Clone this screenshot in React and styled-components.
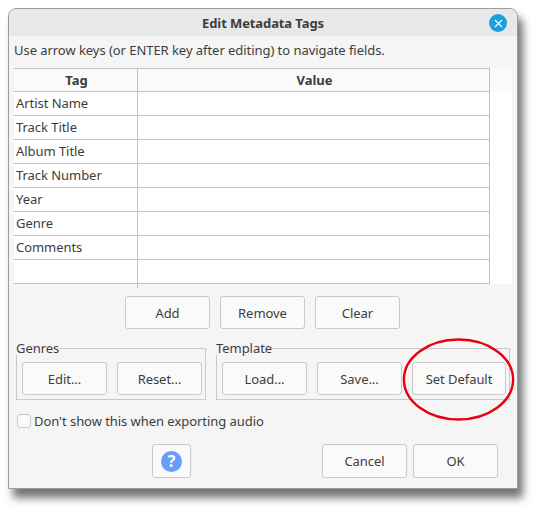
import React from "react";
import styled, { createGlobalStyle } from "styled-components";
import { X } from "lucide-react";

const GlobalStyle = createGlobalStyle`
    html, body {
        margin: 0;
        background: #fff;
    }
    body {
        font-family: "Noto Sans", "Open Sans", sans-serif;
        font-size: 13px;
        letter-spacing: -0.05px;
        color: #3d3d3d;
    }
`

const Page = styled.div`
    width: 541px;
    height: 512px;
    padding: 8px 0 0 8px;
    box-sizing: border-box;
    overflow: hidden;
`

const Dialog = styled.div`
    position: relative;
    width: 510px;
    height: 481px;
    box-sizing: border-box;
    border: 1px solid #9b9b9b;
    border-radius: 8px 8px 0 0;
    background: #f5f5f5;
    box-shadow: 5px 9px 8px rgba(0, 0, 0, 0.55);
    display: flex;
    flex-direction: column;
`

const TitleBar = styled.div`
    height: 27px;
    flex: none;
    background: #e8e8e8;
    border-radius: 7px 7px 0 0;
    display: flex;
    align-items: center;
    justify-content: center;
    position: relative;
    font-weight: 700;
    font-size: 13px;
    letter-spacing: -0.1px;
`

const CloseButton = styled.div`
    position: absolute;
    right: 10px;
    top: 5px;
    width: 18px;
    height: 18px;
    border-radius: 50%;
    background: #1f9ede;
    color: #fff;
    display: flex;
    align-items: center;
    justify-content: center;
`

const Hint = styled.div`
    height: 31px;
    padding: 1px 0 0 5px;
    line-height: 27px;
    flex: none;
`

const TableWrap = styled.div`
    width: 498px;
    margin-left: 5px;
    background: #fff;
    flex: none;
`

const Row = styled.div`
    display: grid;
    grid-template-columns: 124px 352px 22px;
    height: 24px;
    background: ${(p) => (p.$head ? "#fafafa" : "#fff")};
    box-sizing: border-box;
`

const Cell = styled.div`
    box-sizing: border-box;
    border-bottom: 1px solid #c2c2c2;
    border-top: ${(p) => (p.$head ? "1px solid #c2c2c2" : "none")};
    border-right: 1px solid #c2c2c2;
    padding-left: 2px;
    line-height: ${(p) => (p.$head ? "22px" : "23px")};
    font-weight: ${(p) => (p.$head ? 700 : 400)};
    text-align: ${(p) => (p.$head ? "center" : "left")};
    white-space: nowrap;
`

const TableFooter = styled.div`
    height: 4px;
    display: grid;
    grid-template-columns: 124px;
    background: #f5f5f5;
`

const FooterTick = styled.div`
    border-right: 1px solid #c2c2c2;
    height: 4px;
`

const Button = styled.button`
    width: ${(p) => p.$width || 85}px;
    height: 33px;
    padding: 0;
    flex: none;
    box-sizing: border-box;
    border: 1px solid #c9c9c9;
    border-radius: 3px;
    background: #fafafa;
    font: inherit;
    letter-spacing: inherit;
    color: inherit;
`

const AddRow = styled.div`
    display: flex;
    gap: 10px;
    padding: 8px 0 0 116px;
`

const Groups = styled.div`
    display: flex;
    gap: 10px;
    margin: 12px 0 0 7px;
`

const Group = styled.fieldset`
    margin: 0;
    padding: 7px 3px 4px 5px;
    width: ${(p) => p.$width}px;
    height: 59px;
    box-sizing: border-box;
    border: 1px solid #c9c9c9;
    display: flex;
    gap: 10px;
`

const GroupLabel = styled.legend`
    padding: 0;
    margin-left: -6px;
    line-height: 14px;
`

const CheckRow = styled.label`
    display: flex;
    align-items: center;
    gap: 3px;
    margin: 13px 0 0 8px;
    height: 16px;
`

const CheckBox = styled.span`
    width: 14px;
    height: 14px;
    box-sizing: border-box;
    border: 1px solid #c9c9c9;
    border-radius: 3px;
    background: #fafafa;
`

const BottomRow = styled.div`
    display: flex;
    margin: 15px 0 0 143px;
`

const HelpButton = styled(Button)`
    width: 39px;
    height: 34px;
    margin-right: 131px;
    display: flex;
    align-items: center;
    justify-content: center;
`

const OkButton = styled(Button)`
    height: 34px;
    margin-right: 6px;
`

const HelpIcon = styled.span`
    width: 21px;
    height: 21px;
    border-radius: 50%;
    background: #6b9cf8;
    color: #fff;
    font-weight: 700;
    font-size: 16px;
    line-height: 21px;
    text-align: center;
`

const Circle = styled.svg`
    position: absolute;
    left: 391px;
    top: 327px;
    width: 118px;
    height: 86px;
    overflow: visible;
`

const rows = ["Artist Name", "Track Title", "Album Title", "Track Number", "Year", "Genre", "Comments", ""]

const App = () => {
    return (
        <>
            <GlobalStyle />
            <Page>
                <Dialog>
                    <TitleBar>
                        Edit Metadata Tags
                        <CloseButton>
                            <X size={13} strokeWidth={2} />
                        </CloseButton>
                    </TitleBar>
                    <Hint>Use arrow keys (or ENTER key after editing) to navigate fields.</Hint>
                    <TableWrap>
                        <Row $head>
                            <Cell $head>Tag</Cell>
                            <Cell $head>Value</Cell>
                        </Row>
                        {rows.map((name, i) => (
                            <Row key={i}>
                                <Cell>{name}</Cell>
                                <Cell />
                            </Row>
                        ))}
                        <TableFooter>
                            <FooterTick />
                        </TableFooter>
                    </TableWrap>
                    <AddRow>
                        <Button>Add</Button>
                        <Button>Remove</Button>
                        <Button>Clear</Button>
                    </AddRow>
                    <Groups>
                        <Group $width={190}>
                            <GroupLabel>Genres</GroupLabel>
                            <Button>Edit...</Button>
                            <Button>Reset...</Button>
                        </Group>
                        <Group $width={294}>
                            <GroupLabel>Template</GroupLabel>
                            <Button>Load...</Button>
                            <Button>Save...</Button>
                            <Button $width={94}>Set Default</Button>
                        </Group>
                    </Groups>
                    <CheckRow>
                        <CheckBox />
                        Don't show this when exporting audio
                    </CheckRow>
                    <BottomRow>
                        <HelpButton>
                            <HelpIcon>?</HelpIcon>
                        </HelpButton>
                        <OkButton>Cancel</OkButton>
                        <OkButton>OK</OkButton>
                    </BottomRow>
                    <Circle viewBox="0 0 118 86">
                        <ellipse cx="58.5" cy="43.5" rx="54.6" ry="40" fill="none" stroke="#e8000f" strokeWidth="2.4" />
                    </Circle>
                </Dialog>
            </Page>
        </>
    )
}

export default App
